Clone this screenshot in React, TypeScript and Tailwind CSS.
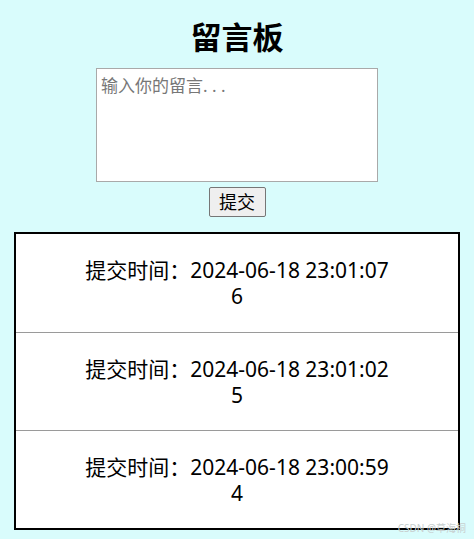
import { useState } from "react";

const messages = [
  { id: 1, time: "2024-06-18 23:01:07", ms: "6" },
  { id: 2, time: "2024-06-18 23:01:02", ms: "5" },
  { id: 3, time: "2024-06-18 23:00:59", ms: "4" },
];

export default function App() {
  const [text, setText] = useState("");

  return (
    <div
      className="relative w-[474px] h-[539px] bg-[#d9fcfc] text-black overflow-hidden"
      style={{ fontFamily: '"Noto Sans", "Noto Sans CJK SC", sans-serif' }}
    >
      <h1 className="pt-[17px] text-center text-[31px] leading-[40px] font-bold">留言板</h1>

      <div className="flex flex-col items-center mt-[11px]">
        <textarea
          value={text}
          onChange={(e) => setText(e.target.value)}
          placeholder="输入你的留言. . ."
          className="w-[282px] h-[114px] bg-white border border-[#a9a9a9] px-[4px] pt-[6px] text-[17px] leading-[22px] placeholder:text-[#777] outline-none resize-none"
        />
        <button className="mt-[5px] w-[57px] h-[30px] bg-[#efefef] border border-[#767676] rounded-[2px] text-[18px] leading-none">
          提交
        </button>
      </div>

      {/* message list */}
      <div className="mx-[14px] mt-[15px] border-2 border-black bg-white">
        {messages.map((m, i) => (
          <div
            key={m.id}
            className={
              "h-[98px] flex flex-col items-center justify-center text-[21px] leading-[26px] " +
              (i > 0 ? "border-t border-[#9a9a9a]" : "")
            }
          >
            <span>提交时间：{m.time}</span>
            <span>{m.ms}</span>
          </div>
        ))}
      </div>

      <div className="absolute right-[8px] bottom-[3px] text-[10px] text-[#c8d0d0]">CSDN @草海桐</div>
    </div>
  );
}
